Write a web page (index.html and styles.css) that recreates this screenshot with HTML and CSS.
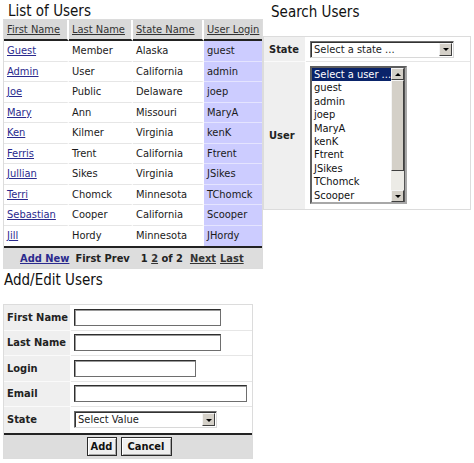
FILE: index.html
```html
<!DOCTYPE html>
<html>
<head>
<meta charset="utf-8">
<link rel="stylesheet" href="styles.css">
</head>
<body>
<div class="page">
  <div class="col-left">
    <h2 class="title title-list">List of Users</h2>
    <table class="grid">
      <colgroup><col class="c1"><col class="c2"><col class="c3"><col class="c4"></colgroup>
      <thead>
        <tr><th><a href="#">First Name</a></th><th><a href="#">Last Name</a></th><th><a href="#">State Name</a></th><th><a href="#">User Login</a></th></tr>
      </thead>
      <tbody>
        <tr><td><a class="name" href="#">Guest</a></td><td>Member</td><td>Alaska</td><td class="login">guest</td></tr>
        <tr><td><a class="name" href="#">Admin</a></td><td>User</td><td>California</td><td class="login">admin</td></tr>
        <tr><td><a class="name" href="#">Joe</a></td><td>Public</td><td>Delaware</td><td class="login">joep</td></tr>
        <tr><td><a class="name" href="#">Mary</a></td><td>Ann</td><td>Missouri</td><td class="login">MaryA</td></tr>
        <tr><td><a class="name" href="#">Ken</a></td><td>Kilmer</td><td>Virginia</td><td class="login">kenK</td></tr>
        <tr><td><a class="name" href="#">Ferris</a></td><td>Trent</td><td>California</td><td class="login">Ftrent</td></tr>
        <tr><td><a class="name" href="#">Jullian</a></td><td>Sikes</td><td>Virginia</td><td class="login">JSikes</td></tr>
        <tr><td><a class="name" href="#">Terri</a></td><td>Chomck</td><td>Minnesota</td><td class="login">TChomck</td></tr>
        <tr><td><a class="name" href="#">Sebastian</a></td><td>Cooper</td><td>California</td><td class="login">Scooper</td></tr>
        <tr><td><a class="name" href="#">Jill</a></td><td>Hordy</td><td>Minnesota</td><td class="login">JHordy</td></tr>
      </tbody>
      <tfoot>
        <tr><td colspan="4">
          <div class="pager">
            <a class="add-new" href="#">Add New</a>
            <span class="p-first">First Prev</span>
            <span class="p-pages">1 <a href="#">2</a> of 2</span>
            <a class="p-next" href="#">Next</a>
            <a class="p-last" href="#">Last</a>
          </div>
        </td></tr>
      </tfoot>
    </table>

    <h2 class="title title-edit">Add/Edit Users</h2>
    <table class="form">
      <colgroup><col class="f1"><col class="f2"></colgroup>
      <tbody>
        <tr><td class="lbl">First Name</td><td class="val"><input class="inp w147" type="text"></td></tr>
        <tr><td class="lbl">Last Name</td><td class="val"><input class="inp w147" type="text"></td></tr>
        <tr><td class="lbl">Login</td><td class="val"><input class="inp w122" type="text"></td></tr>
        <tr><td class="lbl">Email</td><td class="val"><input class="inp w173" type="text"></td></tr>
        <tr><td class="lbl">State</td><td class="val">
          <div class="combo w143"><span class="combo-text">Select Value</span><span class="combo-btn"><span class="arrow-down"></span></span></div>
        </td></tr>
      </tbody>
      <tfoot>
        <tr><td colspan="2"><div class="buttons"><button class="btn btn-add">Add</button><button class="btn btn-cancel">Cancel</button></div></td></tr>
      </tfoot>
    </table>
  </div>

  <div class="col-right">
    <h2 class="title title-search">Search Users</h2>
    <table class="search">
      <colgroup><col class="s1"><col class="s2"></colgroup>
      <tbody>
        <tr class="srow1"><td class="lbl">State</td><td class="val">
          <div class="combo w144"><span class="combo-text">Select a state ...</span><span class="combo-btn"><span class="arrow-down"></span></span></div>
        </td></tr>
        <tr class="srow2"><td class="lbl">User</td><td class="val">
          <div class="listbox">
            <div class="items">
              <div class="item sel">Select a user ...</div>
              <div class="item">guest</div>
              <div class="item">admin</div>
              <div class="item">joep</div>
              <div class="item">MaryA</div>
              <div class="item">kenK</div>
              <div class="item">Ftrent</div>
              <div class="item">JSikes</div>
              <div class="item">TChomck</div>
              <div class="item">Scooper</div>
            </div>
            <div class="scrollbar">
              <div class="sb-btn"><span class="arrow-up"></span></div>
              <div class="sb-thumb"></div>
              <div class="sb-track"></div>
              <div class="sb-btn"><span class="arrow-down"></span></div>
            </div>
          </div>
        </td></tr>
      </tbody>
    </table>
  </div>
</div>
</body>
</html>
```

FILE: styles.css
```css
body {
  margin: 0;
  background: #fff;
  color: #111;
  font-family: "DejaVu Sans Condensed", "DejaVu Sans", sans-serif;
  font-stretch: condensed;
  font-size: 11px;
}

.page {
  display: flex;
  align-items: flex-start;
}

.col-left {
  margin-left: 3px;
  width: 260px;
}

.col-right {
  width: 208px;
}

.title {
  margin: 0;
  font-weight: normal;
  font-size: 15px;
  line-height: 15px;
  color: #111;
}

.title-list {
  padding: 4px 0 0 5px;
}

.title-search {
  padding: 5px 0 0 8px;
  margin-bottom: 16px;
}

.title-edit {
  padding: 4px 0 0 1px;
  margin-bottom: 16px;
}

a {
  color: #2a2a8e;
  text-decoration: underline;
}

/* ---------- list grid ---------- */
.grid {
  width: 260px;
  table-layout: fixed;
  border-collapse: separate;
  border-spacing: 0;
  border: 1px solid #dcdcdc;
}

.grid .c1 { width: 65px; }
.grid .c2 { width: 64px; }
.grid .c3 { width: 71px; }
.grid .c4 { width: 58px; }

.grid th,
.grid td {
  box-sizing: border-box;
  padding: 0 3px;
  text-align: left;
  white-space: nowrap;
  overflow: hidden;
}

.grid th {
  height: 21px;
  background: #d9d9d9;
  font-weight: normal;
  border-right: 2px solid #fff;
  border-bottom: 2px solid #222;
}

.grid th:last-child,
.grid tbody td:last-child {
  border-right: 0;
}

.grid th a {
  color: #333;
}

.grid tbody td {
  height: 20.5px;
  border-right: 2px solid #fff;
  border-bottom: 1px solid #e6e6e6;
  color: #1a1a1a;
}

.grid tbody td.login {
  background: #ccccff;
  border-bottom-color: #e4e4ff;
}

.grid tbody tr:last-child td {
  border-bottom: 0;
}

.grid tfoot td {
  height: 22px;
  padding: 0;
  background: #dddddd;
  border-top: 2px solid #222;
}

.pager {
  display: flex;
  align-items: center;
  padding-left: 16px;
  font-weight: bold;
  color: #222;
  white-space: nowrap;
}

.pager a {
  color: #333;
}

.pager .add-new {
  color: #2a2a8e;
}

.p-first { margin-left: 6px; }
.p-pages { margin-left: 11px; }
.p-next { margin-left: 7px; }
.p-last { margin-left: 4px; }

/* ---------- form ---------- */
.form,
.search {
  table-layout: fixed;
  border-collapse: separate;
  border-spacing: 0;
  border: 1px solid #dcdcdc;
}

.form {
  width: 250px;
}

.form .f1 { width: 67px; }
.form .f2 { width: 181px; }

.form td,
.search td {
  box-sizing: border-box;
  padding: 0;
  vertical-align: middle;
}

.form tbody td {
  height: 25.5px;
}

.lbl {
  background: #efefef;
  font-weight: bold;
  color: #222;
  padding-left: 3px;
  border-right: 1px solid #fff;
  border-bottom: 1px solid #fafafa;
  white-space: nowrap;
}

.form .lbl {
  padding-left: 3px !important;
}

.val {
  border-bottom: 1px solid #e6e6e6;
}

.form .val {
  padding-left: 3px !important;
}

.form tbody tr:last-child td {
  border-bottom: 0;
}

.inp {
  display: block;
  box-sizing: border-box;
  height: 17px;
  margin: 0;
  padding: 0 2px;
  border: 1px solid #3c3c3c;
  border-color: #2f2f2f #6e6e6e #6e6e6e #2f2f2f;
  box-shadow: inset 1px 1px 0 #9a9a9a;
  background: #fff;
  font: inherit;
}

.w147 { width: 147px; }
.w122 { width: 122px; }
.w173 { width: 173px; }
.w143 { width: 143px; }
.w144 { width: 144px; }

.form tfoot td {
  height: 25px;
  background: #dddddd;
  border-top: 2px solid #222;
}

.buttons {
  display: flex;
  justify-content: center;
  gap: 4px;
  padding-left: 2px;
}

.btn {
  box-sizing: border-box;
  height: 19px;
  margin: 0;
  padding: 0;
  background: #efefef;
  border: 1px solid #2a2a2a;
  box-shadow: inset 1px 1px 0 #fff, inset -1px -1px 0 #a8a8a8;
  font: inherit;
  font-weight: bold;
  color: #111;
}

.btn-add { width: 30px; }
.btn-cancel { width: 51px; }

/* ---------- combo ---------- */
.combo {
  box-sizing: border-box;
  display: flex;
  align-items: center;
  height: 17px;
  background: #fff;
  border: 1px solid;
  border-color: #6e6e6e #d8d8d8 #d8d8d8 #6e6e6e;
  box-shadow: inset 1px 1px 0 #333;
  overflow: hidden;
}

.combo-text {
  flex: 1;
  padding-left: 3px;
  white-space: nowrap;
  overflow: hidden;
  color: #222;
}

.combo-btn {
  box-sizing: border-box;
  width: 13px;
  height: 13px;
  margin-right: 1px;
  background: #d4d0c8;
  border: 1px solid;
  border-color: #f4f4f4 #404040 #404040 #f4f4f4;
  display: flex;
  align-items: center;
  justify-content: center;
}

.arrow-down {
  width: 0;
  height: 0;
  border-left: 3px solid transparent;
  border-right: 3px solid transparent;
  border-top: 3px solid #000;
  margin-top: 1px;
}

.arrow-up {
  width: 0;
  height: 0;
  border-left: 3px solid transparent;
  border-right: 3px solid transparent;
  border-bottom: 3px solid #000;
}

/* ---------- search ---------- */
.search {
  width: 208px;
}

.search .s1 { width: 42px; }
.search .s2 { width: 164px; }

.search .lbl {
  padding-left: 5px;
}

.search .val {
  padding: 0 4px;
}

.srow1 td {
  height: 25px;
}

.srow2 td {
  border-bottom: 0;
}

.srow2 .val {
  padding: 4px 4px 5px 4px;
}

.listbox {
  box-sizing: border-box;
  display: flex;
  width: 97px;
  height: 138px;
  border: 2px solid;
  border-color: #5e5e5e #a8a8a8 #a8a8a8 #5e5e5e;
  background: #fff;
  overflow: hidden;
}

.items {
  flex: 1;
  overflow: hidden;
  min-width: 0;
}

.item {
  height: 13.4px;
  line-height: 13.4px;
  padding-left: 2px;
  white-space: nowrap;
  overflow: hidden;
  color: #111;
}

.item.sel {
  background: #0a246a;
  color: #fff;
}

.scrollbar {
  box-sizing: border-box;
  width: 14px;
  display: flex;
  flex-direction: column;
  border-right: 1px solid #555;
}

.sb-btn {
  box-sizing: border-box;
  height: 12px;
  background: #d4d0c8;
  border: 1px solid;
  border-color: #f4f4f4 #404040 #404040 #f4f4f4;
  display: flex;
  align-items: center;
  justify-content: center;
}

.sb-thumb {
  box-sizing: border-box;
  height: 91px;
  background: #d4d0c8;
  border: 1px solid;
  border-color: #f4f4f4 #404040 #404040 #f4f4f4;
}

.sb-track {
  flex: 1;
  background: #ecebe6;
}
```
